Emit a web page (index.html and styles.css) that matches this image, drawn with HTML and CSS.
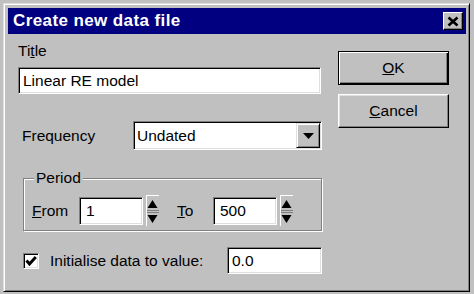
FILE: index.html
```html
<!DOCTYPE html>
<html>
<head>
<meta charset="utf-8">
<link rel="stylesheet" href="styles.css">
</head>
<body>
<div class="window">
  <div class="titlebar">
    <span class="title">Create new data file</span>
    <span class="close"><svg width="12" height="11" viewBox="0 0 12 11"><path d="M1.5 1.5 L10.5 9.5 M10.5 1.5 L1.5 9.5" stroke="#000" stroke-width="2.6" fill="none"/></svg></span>
  </div>
  <div class="content">
    <div class="left">
      <div class="lbl-title">Ti<u>t</u>le</div>
      <div class="field title-field">Linear RE model</div>
      <div class="freq-row">
        <span class="freq-label">Frequency</span>
        <div class="field select">
          <span>Undated</span>
          <span class="drop"><svg width="11" height="6" viewBox="0 0 11 6"><polygon points="0,0 11,0 5.5,6" fill="#000"/></svg></span>
        </div>
      </div>
      <div class="group">
        <span class="group-label">Period</span>
        <div class="period-row">
          <span class="lbl-from"><u>F</u>rom</span>
          <div class="field num">1</div>
          <svg class="spin" width="13" height="31" viewBox="0 0 13 31">
            <rect x="0" y="0" width="1" height="31" fill="#fff"/>
            <rect x="0" y="0" width="13" height="1" fill="#fff"/>
            <polygon points="1.5,13 6.5,5 11.5,13" fill="#000"/>
            <rect x="1" y="15" width="12" height="1" fill="#808080"/>
            <rect x="1" y="17" width="12" height="1" fill="#808080"/>
            <polygon points="1.5,20 11.5,20 6.5,28" fill="#000"/>
          </svg>
          <span class="lbl-to"><u>T</u>o</span>
          <div class="field num">500</div>
          <svg class="spin" width="13" height="31" viewBox="0 0 13 31">
            <rect x="0" y="0" width="1" height="31" fill="#fff"/>
            <rect x="0" y="0" width="13" height="1" fill="#fff"/>
            <polygon points="1.5,13 6.5,5 11.5,13" fill="#000"/>
            <rect x="1" y="15" width="12" height="1" fill="#808080"/>
            <rect x="1" y="17" width="12" height="1" fill="#808080"/>
            <polygon points="1.5,20 11.5,20 6.5,28" fill="#000"/>
          </svg>
        </div>
      </div>
      <div class="init-row">
        <span class="check"><svg width="12" height="12" viewBox="0 0 12 12"><polyline points="1.5,5.5 4.5,9 10.8,2" stroke="#000" stroke-width="2.9" fill="none"/></svg></span>
        <span class="init-label">Initialise data to value:</span>
        <div class="field value">0.0</div>
      </div>
    </div>
    <div class="right">
      <div class="btn default"><span><u>O</u>K</span></div>
      <div class="btn cancel"><span><u>C</u>ancel</span></div>
    </div>
  </div>
</div>
</body>
</html>
```
FILE: styles.css
```css
html, body {
  margin: 0;
  padding: 0;
}
body {
  background: #c0c0c0;
  font-family: "Liberation Sans", Arial, sans-serif;
  font-size: 15.5px;
  color: #000;
  line-height: 18px;
}
.window {
  margin: 3px 0 0 3px;
  width: 467px;
  height: 289px;
  box-sizing: border-box;
  background: #c0c0c0;
  border: 1px solid;
  border-color: #dfdfdf #000 #000 #dfdfdf;
  box-shadow: inset 1px 1px 0 #fff, inset -1px -1px 0 #808080;
  padding: 4px 3px 0 4px;
}
.titlebar {
  height: 26px;
  background: #000080;
  color: #fff;
  display: flex;
  align-items: center;
  justify-content: space-between;
  padding: 0 3px 0 5px;
}
.title {
  font-weight: bold;
  font-size: 17px;
  letter-spacing: 0.4px;
}
.close {
  width: 20px;
  height: 18px;
  box-sizing: border-box;
  background: #c0c0c0;
  border: 1px solid;
  border-color: #fff #000 #000 #fff;
  box-shadow: inset -1px -1px 0 #808080;
  display: flex;
  align-items: center;
  justify-content: center;
}
.content {
  display: flex;
  padding-left: 10px;
}
.left {
  width: 304px;
  display: flex;
  flex-direction: column;
}
.right {
  width: 111px;
  margin-left: 16px;
  display: flex;
  flex-direction: column;
}
.lbl-title {
  margin-top: 8px;
}
.field {
  background: #fff;
  box-sizing: border-box;
  border: 1px solid;
  border-color: #808080 #fff #fff #808080;
  box-shadow: inset 1px 1px 0 #000, inset -1px -1px 0 #dfdfdf;
  padding-left: 4px;
  display: flex;
  align-items: center;
  white-space: nowrap;
}
.title-field {
  margin-top: 7px;
  width: 303px;
  height: 27px;
}
.freq-row {
  margin-top: 27px;
  display: flex;
  align-items: center;
  height: 29px;
}
.freq-label {
  margin-left: 4px;
  width: 111px;
}
.select {
  width: 189px;
  height: 29px;
  padding: 1px 1px 1px 3px;
  justify-content: space-between;
  align-items: stretch;
}
.select > span:first-child {
  display: flex;
  align-items: center;
}
.drop {
  width: 24px;
  box-sizing: border-box;
  background: #c0c0c0;
  border: 1px solid;
  border-color: #dfdfdf #000 #000 #dfdfdf;
  box-shadow: inset 1px 1px 0 #fff, inset -1px -1px 0 #808080;
  display: flex;
  align-items: center;
  justify-content: center;
}
.group {
  position: relative;
  margin: 28px 0 0 5px;
  width: 299px;
  box-sizing: border-box;
  border: 1px solid #808080;
  box-shadow: inset 1px 1px 0 #fff, 1px 1px 0 #fff;
  padding-bottom: 4px;
}
.group-label {
  position: absolute;
  top: -10px;
  left: 10px;
  padding: 0 2px;
  background: #c0c0c0;
}
.period-row {
  margin-top: 16px;
  height: 31px;
  display: flex;
  align-items: center;
  padding-left: 8px;
}
.lbl-from {
  width: 47px;
}
.num {
  width: 64px;
  height: 28px;
  padding-left: 6px;
}
.spin {
  margin-left: 3px;
  display: block;
}
.lbl-to {
  margin-left: 18px;
  width: 36px;
}
.init-row {
  margin-top: 16px;
  height: 27px;
  display: flex;
  align-items: center;
}
.check {
  margin-left: 5px;
  width: 16px;
  height: 16px;
  box-sizing: border-box;
  background: #fff;
  border: 1px solid;
  border-color: #808080 #fff #fff #808080;
  box-shadow: inset 1px 1px 0 #000, inset -1px -1px 0 #dfdfdf;
  display: flex;
  align-items: center;
  justify-content: center;
}
.init-label {
  margin-left: 11px;
  width: 177px;
}
.value {
  width: 95px;
  height: 27px;
}
.btn {
  height: 34px;
  box-sizing: border-box;
  display: flex;
  align-items: center;
  justify-content: center;
  background: #c0c0c0;
}
.default {
  margin-top: 17px;
  border: 1px solid #000;
  box-shadow: inset 1px 1px 0 #fff, inset -1px -1px 0 #000, inset -2px -2px 0 #808080;
}
.cancel {
  margin-top: 9px;
  border: 1px solid;
  border-color: #fff #000 #000 #fff;
  box-shadow: inset -1px -1px 0 #808080, inset 1px 1px 0 #dfdfdf;
}
```
